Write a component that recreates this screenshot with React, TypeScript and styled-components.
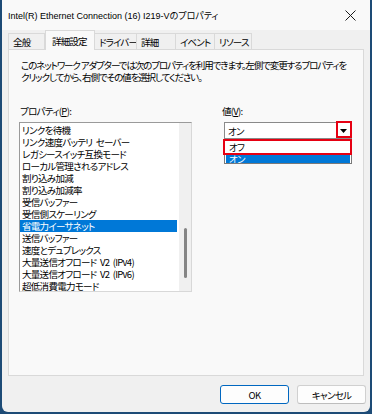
import { createGlobalStyle, styled } from "styled-components";

const Global = createGlobalStyle`
  html, body {
    margin: 0;
    padding: 0;
    background: #1d4b76;
  }
  body {
    font-family: "Noto Sans CJK JP", "Noto Sans", sans-serif;
    font-size: 9.5px;
    letter-spacing: -0.7px;
    font-feature-settings: "palt";
    color: #000;
  }
`;

const props = [
  "リンクを待機",
  "リンク速度バッテリ セーバー",
  "レガシースイッチ互換モード",
  "ローカル管理されるアドレス",
  "割り込み加減",
  "割り込み加減率",
  "受信バッファー",
  "受信側スケーリング",
  "省電力イーサネット",
  "送信バッファー",
  "速度とデュプレックス",
  "大量送信オフロード V2 (IPv4)",
  "大量送信オフロード V2 (IPv6)",
  "超低消費電力モード",
];

const tabs = [
  { label: "全般", width: 37 },
  { label: "詳細設定", width: 50 },
  { label: "ドライバー", width: 42 },
  { label: "詳細", width: 39 },
  { label: "イベント", width: 39 },
  { label: "リソース", width: 37 },
];

const App = () => {
  return (
    <>
      <Global />
      <Window>
        <TitleBar>
          <Title>Intel(R) Ethernet Connection (16) I219-Vのプロパティ</Title>
          <Close>
            <svg width="11" height="11" viewBox="0 0 11 11">
              <path d="M0.5 0.5 L10.5 10.5 M10.5 0.5 L0.5 10.5" stroke="#1a1a1a" strokeWidth="1" />
            </svg>
          </Close>
        </TitleBar>
        <Body>
          <TabRow>
            {tabs.map((t, i) => (
              <Tab key={t.label} $width={t.width} $active={i === 1}>
                {t.label}
              </Tab>
            ))}
          </TabRow>
          <Panel>
            <Description>
              このネットワーク アダプターでは次のプロパティを利用できます。左側で変更するプロパティを
              <br />
              クリックしてから、右側でその値を選択してください。
            </Description>
            <Columns>
              <Column>
                <Label>
                  プロパティ(<u>P</u>):
                </Label>
                <ListBox>
                  <Rows>
                    {props.map((p, i) => (
                      <Row key={p} $selected={i === 8}>
                        {p}
                      </Row>
                    ))}
                  </Rows>
                  <ScrollTrack>
                    <Thumb />
                  </ScrollTrack>
                </ListBox>
              </Column>
              <Column>
                <Label>
                  値(<u>V</u>):
                </Label>
                <Combo>
                  <ComboBox>
                    <ComboText>オン</ComboText>
                    <Arrow>
                      <svg width="7" height="4" viewBox="0 0 7 4">
                        <path d="M0 0 H7 L3.5 4 Z" fill="#000" />
                      </svg>
                    </Arrow>
                  </ComboBox>
                  <DropList>
                    <DropItem>オフ</DropItem>
                    <DropItem $selected>オン</DropItem>
                  </DropList>
                  <RedMark $top={-1} $left={112} $width={16} $height={17} />
                  <RedMark $top={17} $left={-1} $width={129} $height={16} />
                </Combo>
              </Column>
            </Columns>
          </Panel>
          <Footer>
            <Button $primary>OK</Button>
            <Button>キャンセル</Button>
          </Footer>
        </Body>
      </Window>
    </>
  );
};

export default App;

const Window = styled.div`
  width: 368px;
  height: 412px;
  margin: 0 2px;
  background: #f0f0f0;
  border-radius: 0 0 6px 6px;
  overflow: hidden;
  display: flex;
  flex-direction: column;
`;

const TitleBar = styled.div`
  height: 30px;
  flex: none;
  background: #f9f9f9;
  display: flex;
  align-items: center;
  justify-content: space-between;
  padding: 0 0 0 6px;
`;

const Title = styled.div`
  font-family: "Liberation Sans", "Noto Sans CJK JP", sans-serif;
  font-size: 9px;
  letter-spacing: 0;
  padding-top: 1px;
`;

const Close = styled.div`
  width: 34px;
  height: 30px;
  display: flex;
  align-items: center;
  justify-content: center;
  margin-right: 3px;
`;

const Body = styled.div`
  flex: 1;
  display: flex;
  flex-direction: column;
  padding: 0 4px 0 6px;
`;

const TabRow = styled.div`
  height: 20px;
  display: flex;
  align-items: flex-end;
  position: relative;
  z-index: 1;
`;

const Tab = styled.div<{ $active?: boolean; $width: number }>`
  box-sizing: border-box;
  width: ${(p) => p.$width}px;
  height: ${(p) => (p.$active ? 20 : 17)}px;
  padding-left: ${(p) => (p.$active ? 6 : 4)}px;
  padding-top: ${(p) => (p.$active ? 0 : 1)}px;
  display: flex;
  align-items: center;
  white-space: nowrap;
  overflow: hidden;
  background: ${(p) => (p.$active ? "#f9f9f9" : "#f0f0f0")};
  border: 1px solid #d9d9d9;
  border-bottom: ${(p) => (p.$active ? "none" : "1px solid #d9d9d9")};
  border-left: ${(p) => (p.$active ? "1px solid #d9d9d9" : "none")};
  position: relative;
  z-index: ${(p) => (p.$active ? 2 : 1)};
  letter-spacing: -0.85px;
  &:first-child {
    border-left: 1px solid #d9d9d9;
  }
`;

const Panel = styled.div`
  box-sizing: border-box;
  width: 356px;
  height: 327px;
  margin-top: -1px;
  background: #f9f9f9;
  border: 1px solid #d9d9d9;
  padding: 9px 10px 0 10px;
`;

const Description = styled.div`
  line-height: 12px;
  padding-left: 2px;
  white-space: nowrap;
  letter-spacing: -1.1px;
`;

const Columns = styled.div`
  display: grid;
  grid-template-columns: 173px 132px;
  column-gap: 29px;
  margin-top: 22px;
`;

const Column = styled.div`
  display: flex;
  flex-direction: column;
`;

const Label = styled.div`
  line-height: 12px;
  padding-left: 1px;
  margin-bottom: 5px;
`;

const ListBox = styled.div`
  box-sizing: border-box;
  height: 170px;
  background: #fff;
  border: 1px solid #9a9a9a;
  border-right-color: #d8d8d8;
  border-bottom-color: #d8d8d8;
  display: flex;
  overflow: hidden;
`;

const Rows = styled.div`
  flex: 1;
  padding-top: 1px;
  overflow: hidden;
`;

const Row = styled.div<{ $selected?: boolean }>`
  height: 12px;
  line-height: 12px;
  padding-left: 2px;
  margin-right: 2px;
  white-space: pre;
  word-spacing: 2px;
  background: ${(p) => (p.$selected ? "#0078d7" : "transparent")};
  color: ${(p) => (p.$selected ? "#fff" : "#000")};
`;

const ScrollTrack = styled.div`
  width: 12px;
  flex: none;
  background: #f0f0f0;
  display: flex;
  justify-content: center;
  padding-top: 105px;
  box-sizing: border-box;
`;

const Thumb = styled.div`
  width: 3px;
  height: 50px;
  border-radius: 2px;
  background: #858585;
`;

const Combo = styled.div`
  position: relative;
  margin-left: 3px;
  width: 128px;
`;

const ComboBox = styled.div`
  box-sizing: border-box;
  height: 17px;
  background: #fff;
  border: 1px solid #8a8a8a;
  display: flex;
  align-items: center;
`;

const ComboText = styled.div`
  flex: 1;
  padding-left: 3px;
  line-height: 12px;
`;

const Arrow = styled.div`
  width: 16px;
  height: 15px;
  display: flex;
  align-items: center;
  justify-content: center;
`;

const DropList = styled.div`
  box-sizing: border-box;
  height: 25px;
  background: #fff;
  border: 1px solid #7a7a7a;
  border-top: none;
  padding-top: 2px;
  overflow: hidden;
`;

const DropItem = styled.div<{ $selected?: boolean }>`
  height: 12px;
  line-height: 12px;
  padding-left: 3px;
  margin: 0 1px;
  background: ${(p) => (p.$selected ? "#0078d7" : "#fff")};
  color: ${(p) => (p.$selected ? "#fff" : "#000")};
`;

const RedMark = styled.div<{ $top: number; $left: number; $width: number; $height: number }>`
  position: absolute;
  box-sizing: border-box;
  top: ${(p) => p.$top}px;
  left: ${(p) => p.$left}px;
  width: ${(p) => p.$width}px;
  height: ${(p) => p.$height}px;
  border: 2px solid #e60012;
`;

const Footer = styled.div`
  display: flex;
  justify-content: flex-end;
  gap: 8px;
  padding-top: 9px;
`;

const Button = styled.div<{ $primary?: boolean }>`
  box-sizing: border-box;
  width: 69px;
  height: 19px;
  border-radius: 3px;
  background: #fdfdfd;
  border: 1px solid ${(p) => (p.$primary ? "#0067c0" : "#d0d0d0")};
  border-bottom-color: ${(p) => (p.$primary ? "#0067c0" : "#bdbdbd")};
  display: flex;
  align-items: center;
  justify-content: center;
`;
